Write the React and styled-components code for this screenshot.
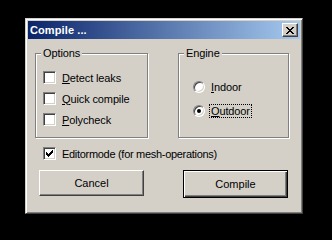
import React from "react";
import styled, { createGlobalStyle } from "styled-components";

const Global = createGlobalStyle`
  html, body { margin: 0; padding: 0; background: #000; }
  body { width: 332px; height: 240px; overflow: hidden; font-family: "Liberation Sans", Arial, sans-serif; }
`;

const Window = styled.div`
  box-sizing: border-box;
  margin: 18px 0 0 25px;
  width: 278px;
  height: 196px;
  background: #d4d0c8;
  border: 1px solid;
  border-color: #d4d0c8 #404040 #404040 #d4d0c8;
  box-shadow: inset 1px 1px #fff, inset -1px -1px #808080;
  padding: 2px;
  display: flex;
  flex-direction: column;
`;

const TitleBar = styled.div`
  height: 18px;
  flex: none;
  background: linear-gradient(to right, #0a246a, #a6caf0);
  display: flex;
  align-items: center;
  justify-content: space-between;
  padding: 0 2px 0 2px;
`;

const Title = styled.span`
  color: #fff;
  font-weight: bold;
  font-size: 11px;
  letter-spacing: 0.1px;
`;

const CloseBtn = styled.div`
  box-sizing: border-box;
  width: 16px;
  height: 14px;
  background: #d4d0c8;
  border: 1px solid;
  border-color: #fff #404040 #404040 #fff;
  box-shadow: inset -1px -1px #808080;
  display: flex;
  align-items: center;
  justify-content: center;
`;

const Body = styled.div`
  display: flex;
  flex-direction: column;
`;

const GroupRow = styled.div`
  display: flex;
  gap: 30px;
  margin-top: 14px;
  padding-left: 7px;
`;

const Group = styled.div`
  position: relative;
  box-sizing: border-box;
  width: ${(p) => p.$w}px;
  height: 85px;
  border: 1px solid #808080;
  box-shadow: inset 1px 1px #fff, 1px 1px #fff;
  display: flex;
  flex-direction: column;
  gap: ${(p) => p.$gap}px;
  padding: ${(p) => p.$pt}px 0 0 ${(p) => p.$pl}px;
`;

const Legend = styled.span`
  position: absolute;
  top: -8px;
  left: 5px;
  padding: 0 2px;
  background: #d4d0c8;
  font-size: 11px;
  line-height: 14px;
  color: #000;
  letter-spacing: -0.1px;
`;

const Row = styled.label`
  display: flex;
  align-items: center;
  height: 13px;
  gap: 5px;
  font-size: 11px;
  color: #000;
`;

const Box = styled.span`
  box-sizing: border-box;
  width: 13px;
  height: 13px;
  flex: none;
  background: #fff;
  border: 1px solid;
  border-color: #808080 #fff #fff #808080;
  box-shadow: inset 1px 1px #404040, inset -1px -1px #d4d0c8;
  display: flex;
  align-items: center;
  justify-content: center;
`;

const Radio = styled.span`
  box-sizing: border-box;
  width: 12px;
  height: 12px;
  flex: none;
  border-radius: 50%;
  background: #fff;
  border: 1px solid;
  border-color: #808080 #fff #fff #808080;
  box-shadow: inset 1px 1px #404040, inset -1px -1px #d4d0c8;
  display: flex;
  align-items: center;
  justify-content: center;
`;

const Dot = styled.span`
  width: 4px;
  height: 4px;
  border-radius: 50%;
  background: #000;
`;

const Text = styled.span`
  padding: 0 1px;
  outline: ${(p) => (p.$focus ? "1px dotted #000" : "none")};
  line-height: 12px;
  letter-spacing: ${(p) => (p.$tight ? -0.3 : -0.12)}px;
`;

const U = styled.u`
  text-decoration-thickness: 1px;
  text-underline-offset: 1px;
`;

const EditorRow = styled(Row)`
  margin: 9px 0 0 15px;
`;

const ButtonRow = styled.div`
  display: flex;
  align-items: flex-start;
  gap: 39px;
  margin: 10px 0 0 11px;
`;

const Button = styled.div`
  box-sizing: border-box;
  width: 105px;
  height: ${(p) => (p.$default ? 28 : 26)}px;
  background: #d4d0c8;
  border: 1px solid;
  border-color: ${(p) => (p.$default ? "#000" : "#fff #404040 #404040 #fff")};
  box-shadow: ${(p) =>
    p.$default
      ? "inset 1px 1px #fff, inset -1px -1px #404040, inset -2px -2px #808080"
      : "inset -1px -1px #808080"};
  display: flex;
  align-items: center;
  justify-content: center;
  font-size: 11px;
  color: #000;
`;

const Check = () => (
  <svg width="7" height="7" viewBox="0 0 7 7" shapeRendering="crispEdges">
    <path d="M0 2h1v3h-1z M1 3h1v3h-1z M2 4h1v3h-1z M3 3h1v3h-1z M4 2h1v3h-1z M5 1h1v3h-1z M6 0h1v3h-1z" fill="#000" />
  </svg>
);

const XIcon = () => (
  <svg width="8" height="7" viewBox="0 0 8 7" shapeRendering="crispEdges">
    <path d="M0 0h2v1h-2z M1 1h2v1h-2z M2 2h4v1h-4z M3 3h2v1h-2z M2 4h4v1h-4z M1 5h2v1h-2z M0 6h2v1h-2z M6 0h2v1h-2z M5 1h2v1h-2z M5 5h2v1h-2z M6 6h2v1h-2z" fill="#000" />
  </svg>
);

export default function App() {
  return (
    <>
      <Global />
      <Window>
        <TitleBar>
          <Title>Compile ...</Title>
          <CloseBtn>
            <XIcon />
          </CloseBtn>
        </TitleBar>
        <Body>
          <GroupRow>
            <Group $w={113} $gap={8} $pt={17} $pl={7}>
              <Legend>Options</Legend>
              <Row>
                <Box />
                <Text><U>D</U>etect leaks</Text>
              </Row>
              <Row>
                <Box />
                <Text><U>Q</U>uick compile</Text>
              </Row>
              <Row>
                <Box />
                <Text><U>P</U>olycheck</Text>
              </Row>
            </Group>
            <Group $w={111} $gap={11} $pt={26} $pl={14}>
              <Legend>Engine</Legend>
              <Row>
                <Radio />
                <Text><U>I</U>ndoor</Text>
              </Row>
              <Row>
                <Radio>
                  <Dot />
                </Radio>
                <Text $focus><U>O</U>utdoor</Text>
              </Row>
            </Group>
          </GroupRow>
          <EditorRow>
            <Box>
              <Check />
            </Box>
            <Text $tight>Editormode (for mesh-operations)</Text>
          </EditorRow>
          <ButtonRow>
            <Button>Cancel</Button>
            <Button $default>Compile</Button>
          </ButtonRow>
        </Body>
      </Window>
    </>
  );
}
